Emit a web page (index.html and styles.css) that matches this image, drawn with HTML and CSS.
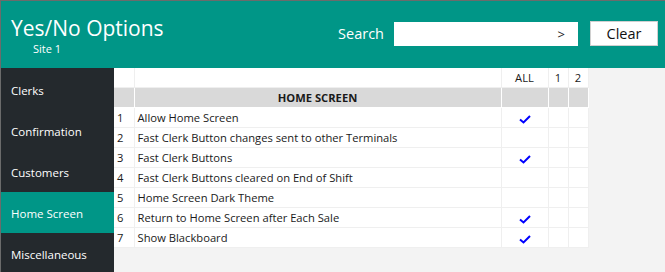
FILE: index.html
```html
<!DOCTYPE html>
<html>
<head>
<meta charset="utf-8">
<link rel="stylesheet" href="styles.css">
</head>
<body>
<div class="app">
  <header class="header">
    <div class="titles">
      <div class="title">Yes/No Options</div>
      <div class="subtitle">Site 1</div>
    </div>
    <div class="search">
      <span class="search-label">Search</span>
      <div class="search-input"><span class="go">&gt;</span></div>
      <button class="clear">Clear</button>
    </div>
  </header>
  <div class="main">
    <nav class="sidebar">
      <div class="nav-item">Clerks</div>
      <div class="nav-item">Confirmation</div>
      <div class="nav-item">Customers</div>
      <div class="nav-item active">Home Screen</div>
      <div class="nav-item">Miscellaneous</div>
    </nav>
    <section class="content">
      <table class="grid">
        <colgroup>
          <col class="c-num"><col class="c-label"><col class="c-all"><col class="c-site"><col class="c-site">
        </colgroup>
        <tr class="head">
          <td></td><td></td><td class="center">ALL</td><td class="center">1</td><td class="center">2</td>
        </tr>
        <tr class="group">
          <td></td><td class="center bold">HOME SCREEN</td><td></td><td></td><td></td>
        </tr>
        <tr><td>1</td><td>Allow Home Screen</td><td class="center"><svg class="tick" viewBox="0 0 12 9"><path d="M1 4.5 L4.5 7.5 L11 1" /></svg></td><td></td><td></td></tr>
        <tr><td>2</td><td>Fast Clerk Button changes sent to other Terminals</td><td></td><td></td><td></td></tr>
        <tr><td>3</td><td>Fast Clerk Buttons</td><td class="center"><svg class="tick" viewBox="0 0 12 9"><path d="M1 4.5 L4.5 7.5 L11 1" /></svg></td><td></td><td></td></tr>
        <tr><td>4</td><td>Fast Clerk Buttons cleared on End of Shift</td><td></td><td></td><td></td></tr>
        <tr><td>5</td><td>Home Screen Dark Theme</td><td></td><td></td><td></td></tr>
        <tr><td>6</td><td>Return to Home Screen after Each Sale</td><td class="center"><svg class="tick" viewBox="0 0 12 9"><path d="M1 4.5 L4.5 7.5 L11 1" /></svg></td><td></td><td></td></tr>
        <tr><td>7</td><td>Show Blackboard</td><td class="center"><svg class="tick" viewBox="0 0 12 9"><path d="M1 4.5 L4.5 7.5 L11 1" /></svg></td><td></td><td></td></tr>
      </table>
    </section>
  </div>
</div>
</body>
</html>
```
FILE: styles.css
```css
html, body {
  margin: 0;
  padding: 0;
  width: 665px;
  height: 272px;
  overflow: hidden;
  font-family: "Open Sans", "Noto Sans", sans-serif;
}
.app {
  width: 664px;
  height: 271px;
  border-top: 1px solid #6b6b6b;
  border-left: 1px solid #6b6b6b;
  display: flex;
  flex-direction: column;
  background: #f3f3f3;
}
.header {
  height: 67px;
  background: #009687;
  color: #fff;
  display: flex;
  justify-content: space-between;
  align-items: flex-start;
  flex-shrink: 0;
}
.titles {
  padding: 13px 0 0 10px;
}
.title {
  font-size: 21px;
  line-height: 28px;
}
.subtitle {
  font-size: 11px;
  line-height: 14px;
  padding-left: 22px;
}
.search {
  display: flex;
  align-items: center;
  padding: 20px 7px 0 0;
}
.search-label {
  font-size: 14.5px;
  margin-right: 10px;
}
.search-input {
  width: 184px;
  height: 24px;
  background: #fff;
  color: #222;
  display: flex;
  align-items: center;
  justify-content: flex-end;
  box-sizing: border-box;
  padding-right: 13px;
  font-size: 13px;
}
.clear {
  margin-left: 12px;
  width: 68px;
  height: 25px;
  background: #fff;
  border: 1px solid #d0d0d0;
  font-family: inherit;
  font-size: 14.5px;
  color: #111;
  padding: 0;
}
.main {
  flex: 1;
  display: flex;
}
.sidebar {
  width: 113px;
  background: #24292d;
  color: #fff;
  flex-shrink: 0;
}
.nav-item {
  height: 41px;
  display: flex;
  align-items: center;
  padding-left: 10px;
  padding-top: 2px;
  box-sizing: border-box;
  font-size: 11.5px;
}
.nav-item:first-child {
  height: 42px;
  padding-top: 3px;
}
.nav-item.active {
  background: #009687;
}
.content {
  flex: 1;
}
.grid {
  border-collapse: collapse;
  table-layout: fixed;
  width: 474px;
  font-size: 11.2px;
  color: #1a1a1a;
}
.c-num { width: 20px; }
.c-label { width: 367px; }
.c-all { width: 47px; }
.c-site { width: 20px; }
.grid td {
  height: 19px;
  padding: 0 0 0 3px;
  background: #fff;
  border-right: 1px solid #efefef;
  border-bottom: 1px solid #efefef;
  white-space: nowrap;
  overflow: hidden;
  line-height: 19px;
  color: #1a1a1a;
}
.grid td.center {
  text-align: center;
  padding: 0;
}
.grid tr.group td {
  background: #d9d9d9;
  border-right-color: #fff;
  border-bottom-color: #fff;
}
.bold {
  font-weight: bold;
}
.tick {
  width: 12px;
  height: 9px;
  display: inline-block;
  vertical-align: middle;
  fill: none;
  stroke: #0000ff;
  stroke-width: 2;
}
```
